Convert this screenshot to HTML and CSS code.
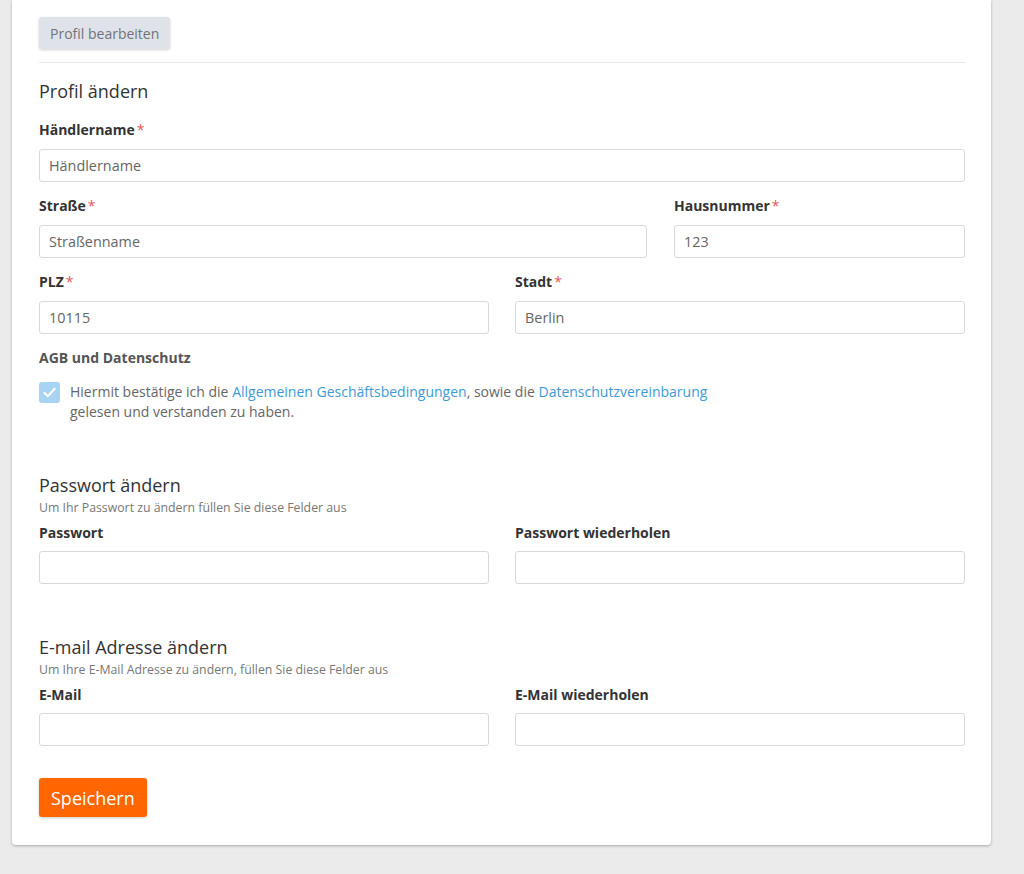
FILE: index.html
```html
<!DOCTYPE html>
<html lang="de">
<head>
<meta charset="utf-8">
<title>Profil ändern</title>
<link rel="stylesheet" href="styles.css">
</head>
<body>
<div class="card">
  <button class="tab-btn" type="button">Profil bearbeiten</button>
  <hr class="divider">

  <h2 class="section-title first">Profil ändern</h2>
  <div class="row">
    <div class="field">
      <label>Händlername<span class="req">*</span></label>
      <input type="text" value="Händlername">
    </div>
  </div>
  <div class="row cols-street">
    <div class="field">
      <label>Straße<span class="req">*</span></label>
      <input type="text" value="Straßenname">
    </div>
    <div class="field">
      <label>Hausnummer<span class="req">*</span></label>
      <input type="text" value="123">
    </div>
  </div>
  <div class="row cols-half">
    <div class="field">
      <label>PLZ<span class="req">*</span></label>
      <input type="text" value="10115">
    </div>
    <div class="field">
      <label>Stadt<span class="req">*</span></label>
      <input type="text" value="Berlin">
    </div>
  </div>

  <div class="agb-label">AGB und Datenschutz</div>
  <div class="check-row">
    <span class="checkbox">
      <svg width="15" height="15" viewBox="0 0 14 14"><path d="M2.3 7.4 L5.5 10.4 L11.8 3.5" fill="none" stroke="#fff" stroke-width="2" stroke-linecap="round" stroke-linejoin="round"/></svg>
    </span>
    <p class="check-text">Hiermit bestätige ich die <a href="#">Allgemeinen Geschäftsbedingungen</a>, sowie die <a href="#">Datenschutzvereinbarung</a><br>gelesen und verstanden zu haben.</p>
  </div>

  <h2 class="section-title spaced">Passwort ändern</h2>
  <p class="hint">Um Ihr Passwort zu ändern füllen Sie diese Felder aus</p>
  <div class="row cols-half">
    <div class="field compact">
      <label>Passwort</label>
      <input type="password">
    </div>
    <div class="field compact">
      <label>Passwort wiederholen</label>
      <input type="password">
    </div>
  </div>

  <h2 class="section-title spaced">E-mail Adresse ändern</h2>
  <p class="hint">Um Ihre E-Mail Adresse zu ändern, füllen Sie diese Felder aus</p>
  <div class="row cols-half last">
    <div class="field compact">
      <label>E-Mail</label>
      <input type="email">
    </div>
    <div class="field compact">
      <label>E-Mail wiederholen</label>
      <input type="email">
    </div>
  </div>

  <button class="save-btn" type="button">Speichern</button>
</div>
</body>
</html>
```

FILE: styles.css
```css
* { box-sizing: border-box; }
html, body { margin: 0; padding: 0; }
body {
  background: #ebebeb;
  font-family: "Open Sans", "Noto Sans", sans-serif;
  color: #333;
  height: 874px;
  overflow: hidden;
}
.card {
  width: 979px;
  margin-left: 12px;
  background: #fff;
  border-radius: 0 0 4px 4px;
  box-shadow: 0 1px 3px rgba(0,0,0,0.28);
  padding: 17px 26px 28px 27px;
}
.tab-btn {
  display: block;
  height: 32px;
  padding: 0 11px;
  border: none;
  border-radius: 3px;
  background: #dfe2e8;
  color: #6f747c;
  font-family: inherit;
  font-size: 14px;
  box-shadow: 0 1px 3px rgba(0,0,0,0.18);
}
.divider {
  border: none;
  border-top: 1px solid #e8e8e8;
  margin: 13px 0 0 0;
}
.section-title {
  font-size: 18px;
  font-weight: 400;
  line-height: 22px;
  margin: 0;
  color: #333;
}
.section-title.first { margin-top: 17px; margin-bottom: 18px; }
.section-title.spaced { margin-top: 52px; }
.hint {
  font-size: 12.3px;
  line-height: 16px;
  color: #777;
  margin: 4px 0 7px 0;
}
.row { margin-bottom: 14px; }
.row.last { margin-bottom: 0; }
.cols-street { display: grid; grid-template-columns: 608px 1fr; column-gap: 27px; }
.cols-half { display: grid; grid-template-columns: 1fr 1fr; column-gap: 26px; }
.field label {
  display: block;
  font-size: 14px;
  font-weight: 700;
  line-height: 20px;
  margin-bottom: 9px;
  color: #333;
}
.field.compact label { margin-bottom: 8px; }
.req { color: #e8575c; margin-left: 2px; font-weight: 400; }
.field input {
  display: block;
  width: 100%;
  height: 33px;
  border: 1px solid #d9d9d9;
  border-radius: 3px;
  padding: 0 9px;
  font-family: inherit;
  font-size: 14.4px;
  color: #666;
  background: #fff;
  outline: none;
}
.agb-label {
  font-size: 14px;
  font-weight: 700;
  line-height: 20px;
  color: #555;
  margin-bottom: 14px;
}
.check-row { display: flex; align-items: flex-start; }
.checkbox {
  width: 21px;
  height: 21px;
  flex: none;
  margin: 0 10px 0 0;
  border-radius: 3px;
  background: #a7d4f3;
  display: flex;
  align-items: center;
  justify-content: center;
}
.check-text {
  margin: 0;
  font-size: 14px;
  line-height: 20px;
  color: #666;
}
.check-text a { color: #3d9ad6; text-decoration: none; }
.save-btn {
  display: block;
  margin-top: 32px;
  height: 39px;
  padding: 0 12px;
  border: none;
  border-radius: 3px;
  background: #ff6600;
  color: #fff;
  font-family: inherit;
  font-size: 18px;
  box-shadow: 0 1px 3px rgba(0,0,0,0.2);
}
```
